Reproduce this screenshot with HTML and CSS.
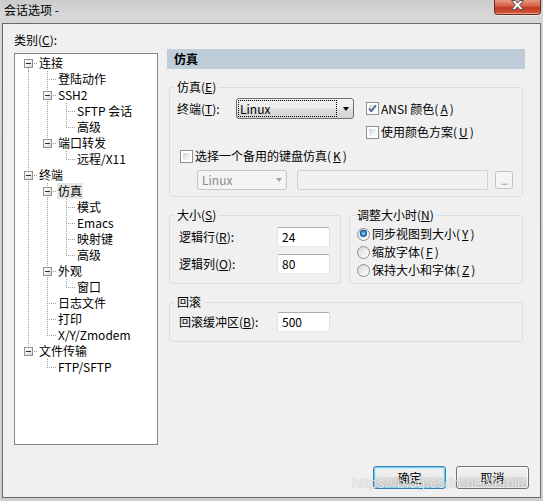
FILE: index.html
```html
<!DOCTYPE html>
<html lang="zh-CN">
<head>
  <meta charset="UTF-8">
  <title>会话选项</title>
  <link rel="stylesheet" href="styles.css">
</head>
<body>
<div class="window">
  <div class="titlebar">
    <span class="title">会话选项 -</span>
    <span class="close">
      <svg width="13" height="10" viewBox="0 0 13 10"><path d="M0.5 0.5h3.6L6.5 3.2 8.9 0.5h3.6L8.6 5l3.9 4.5H8.9L6.5 6.8 4.1 9.5H0.5L4.4 5z" fill="#fff" stroke="#555" stroke-width="1"/></svg>
    </span>
  </div>

  <div class="client">
    <div class="main">
      <!-- 左侧：类别树 -->
      <div class="category">
        <div class="cat-label">类别(<u>C</u>):</div>
        <div class="tree">
          <div class="node"><i class="g g-f"><b class="box"></b></i><span class="lbl">连接</span></div>
          <div class="node"><i class="g g-v"></i><i class="g g-t"></i><span class="lbl">登陆动作</span></div>
          <div class="node"><i class="g g-v"></i><i class="g g-t"><b class="box"></b></i><span class="lbl">SSH2</span></div>
          <div class="node"><i class="g g-v"></i><i class="g g-v"></i><i class="g g-t"></i><span class="lbl">SFTP 会话</span></div>
          <div class="node"><i class="g g-v"></i><i class="g g-v"></i><i class="g g-l"></i><span class="lbl">高级</span></div>
          <div class="node"><i class="g g-v"></i><i class="g g-l"><b class="box"></b></i><span class="lbl">端口转发</span></div>
          <div class="node"><i class="g g-v"></i><i class="g"></i><i class="g g-l"></i><span class="lbl">远程/X11</span></div>
          <div class="node"><i class="g g-t"><b class="box"></b></i><span class="lbl">终端</span></div>
          <div class="node"><i class="g g-v"></i><i class="g g-t"><b class="box"></b></i><span class="lbl current">仿真</span></div>
          <div class="node"><i class="g g-v"></i><i class="g g-v"></i><i class="g g-t"></i><span class="lbl">模式</span></div>
          <div class="node"><i class="g g-v"></i><i class="g g-v"></i><i class="g g-t"></i><span class="lbl">Emacs</span></div>
          <div class="node"><i class="g g-v"></i><i class="g g-v"></i><i class="g g-t"></i><span class="lbl">映射键</span></div>
          <div class="node"><i class="g g-v"></i><i class="g g-v"></i><i class="g g-l"></i><span class="lbl">高级</span></div>
          <div class="node"><i class="g g-v"></i><i class="g g-t"><b class="box"></b></i><span class="lbl">外观</span></div>
          <div class="node"><i class="g g-v"></i><i class="g g-v"></i><i class="g g-l"></i><span class="lbl">窗口</span></div>
          <div class="node"><i class="g g-v"></i><i class="g g-t"></i><span class="lbl">日志文件</span></div>
          <div class="node"><i class="g g-v"></i><i class="g g-t"></i><span class="lbl">打印</span></div>
          <div class="node"><i class="g g-v"></i><i class="g g-l"></i><span class="lbl">X/Y/Zmodem</span></div>
          <div class="node"><i class="g g-l"><b class="box"></b></i><span class="lbl">文件传输</span></div>
          <div class="node"><i class="g"></i><i class="g g-l"></i><span class="lbl">FTP/SFTP</span></div>
        </div>
      </div>

      <!-- 右侧：仿真页 -->
      <div class="page">
        <div class="page-title">仿真</div>

        <fieldset class="group g-emu">
          <legend>仿真(<u>E</u>)</legend>
          <div class="row row-term">
            <span class="lab-term">终端(<u>T</u>):</span>
            <span class="combo"><span class="combo-text">Linux</span><i class="arrow"></i></span>
            <span class="opt opt-ansi">
              <span class="check on"><svg width="9" height="9" viewBox="0 0 9 9"><path d="M1 4.5l2.3 2.6L8 1.2" fill="none" stroke="#4a6296" stroke-width="1.8"/></svg></span>ANSI 颜色(<u>A</u>)
            </span>
          </div>
          <div class="row row-scheme">
            <span class="opt"><span class="check"></span>使用颜色方案(<u>U</u>)</span>
          </div>
          <div class="row row-kbd">
            <span class="opt"><span class="check"></span>选择一个备用的键盘仿真(<u>K</u>)</span>
          </div>
          <div class="row row-alt">
            <span class="combo combo-off"><span class="combo-text">Linux</span><i class="arrow"></i></span>
            <span class="field-off"></span>
            <span class="dots">...</span>
          </div>
        </fieldset>

        <div class="pair">
          <fieldset class="group g-size">
            <legend>大小(<u>S</u>)</legend>
            <div class="line">
              <span class="lab">逻辑行(<u>R</u>):</span>
              <span class="field">24</span>
            </div>
            <div class="line line-2">
              <span class="lab">逻辑列(<u>O</u>):</span>
              <span class="field">80</span>
            </div>
          </fieldset>

          <fieldset class="group g-resize">
            <legend>调整大小时(<u>N</u>)</legend>
            <div class="radio-line"><span class="radio on"></span>同步视图到大小(<u>Y</u>)</div>
            <div class="radio-line"><span class="radio"></span>缩放字体(<u>F</u>)</div>
            <div class="radio-line"><span class="radio"></span>保持大小和字体(<u>Z</u>)</div>
          </fieldset>
        </div>

        <fieldset class="group g-scroll">
          <legend>回滚</legend>
          <div class="line">
            <span class="lab">回滚缓冲区(<u>B</u>):</span>
            <span class="field">500</span>
          </div>
        </fieldset>
      </div>
    </div>

    <div class="buttons">
      <span class="btn btn-default">确定</span>
      <span class="btn">取消</span>
    </div>
  </div>

  <div class="watermark">https://blog.csdn.net/leinili</div>
</div>
</body>
</html>
```

FILE: styles.css
```css
* {
  margin: 0;
  padding: 0;
  box-sizing: border-box;
}

body {
  width: 543px;
  height: 501px;
  overflow: hidden;
  font: 12px/16px "Noto Sans CJK SC", sans-serif;
  color: #000;
}

u {
  text-decoration: underline;
  text-underline-offset: 1px;
}

/* 窗口外框 */
.window {
  position: relative;
  height: 501px;
  padding: 0 2px 3px 2px;
  display: flex;
  flex-direction: column;
  background: linear-gradient(to bottom, #cbcbcb 0, #d6d6d6 12px, #d3d3d3 60%, #cfcfcf 100%);
}

.titlebar {
  height: 23px;
  flex: none;
  display: flex;
  justify-content: space-between;
  align-items: flex-start;
}

.title {
  padding: 2px 0 0 2px;
}

.close {
  width: 47px;
  height: 15px;
  display: flex;
  justify-content: center;
  align-items: flex-start;
  padding-top: 0;
  border: 1px solid #6a2a20;
  border-top: 0;
  border-radius: 0 0 4px 4px;
  background: linear-gradient(to bottom, #e79a86 0, #d45a43 45%, #c23a22 55%, #cf5a3e 100%);
  box-shadow: inset 0 -1px 0 rgba(255, 200, 180, .6), 0 1px 0 rgba(255, 255, 255, .5);
}

.client {
  flex: 1;
  display: flex;
  flex-direction: column;
  border: 1px solid #6a6a6a;
  background: #f0f0f0;
}

.main {
  display: flex;
  padding-left: 11px;
}

/* 类别树 */
.category {
  width: 144px;
  padding-top: 8px;
}

.cat-label {
  height: 16px;
  margin-bottom: 5px;
}

.tree {
  height: 392px;
  padding: 1px 0 0 4px;
  border: 1px solid #828790;
  background: #fff;
}

.node {
  display: flex;
  height: 16px;
}

.g {
  display: block;
  flex: none;
  width: 19px;
  height: 16px;
  --dv: repeating-linear-gradient(to bottom, #a0a0a0 0 1px, transparent 1px 2px);
  --dh: repeating-linear-gradient(to right, #a0a0a0 0 1px, transparent 1px 2px);
}

.g-v {
  background: var(--dv) 9px 0 / 1px 16px no-repeat;
}

.g-t {
  background: var(--dv) 9px 0 / 1px 16px no-repeat, var(--dh) 11px 8px / 8px 1px no-repeat;
}

.g-l {
  background: var(--dv) 9px 0 / 1px 9px no-repeat, var(--dh) 11px 8px / 8px 1px no-repeat;
}

.g-f {
  background: var(--dv) 9px 9px / 1px 7px no-repeat, var(--dh) 11px 8px / 8px 1px no-repeat;
}

.box {
  display: block;
  width: 9px;
  height: 9px;
  margin: 4px 0 0 5px;
  border: 1px solid #919191;
  background: linear-gradient(#2b2b2b, #2b2b2b) 1px 3px / 5px 1px no-repeat,
              linear-gradient(135deg, #fff 0, #f0f0f0 50%, #d6d6d6 100%);
}

.lbl {
  padding: 0 1px;
  white-space: nowrap;
}

.lbl.current {
  background: #e6e6e6;
}

/* 右侧页面 */
.page {
  width: 358px;
  margin-left: 9px;
  padding-top: 25px;
}

.page-title {
  height: 20px;
  padding-left: 7px;
  line-height: 20px;
  font-weight: bold;
  background: #bfcddb;
}

.group {
  min-width: 0;
  margin: 10px 2px 0;
  padding: 3px 8px 6px 7px;
  border: 1px solid #d5dfe5;
  border-radius: 3px;
}

.group legend {
  margin-left: -2px;
  padding: 0 2px;
  line-height: 16px;
}

.row {
  display: flex;
  align-items: center;
}

.row-term {
  height: 21px;
}

.lab-term {
  width: 59px;
}

.combo {
  display: flex;
  align-items: center;
  width: 118px;
  height: 21px;
  padding: 1px 0 1px 1px;
  border: 1px solid #707070;
  border-radius: 3px;
  background: linear-gradient(to bottom, #f3f3f3 0, #ececec 45%, #dedede 55%, #d4d4d4 100%);
}

.combo-text {
  flex: 1;
  height: 100%;
  padding-left: 1px;
  line-height: 15px;
  border: 1px dotted #000;
}

.arrow {
  display: block;
  width: 0;
  height: 0;
  margin: 0 4px 0 6px;
  border-top: 4px solid #000;
  border-left: 3.5px solid transparent;
  border-right: 3.5px solid transparent;
}

.opt {
  display: flex;
  align-items: center;
  gap: 2px;
  height: 16px;
  white-space: nowrap;
}

.opt-ansi {
  margin-left: 12px;
}

.check {
  display: flex;
  align-items: center;
  justify-content: center;
  width: 13px;
  height: 13px;
  padding: 2px;
  border: 1px solid #8e8f8f;
  background: linear-gradient(135deg, #cdd1d6 0, #eef0f2 60%, #f8f8f8 100%) content-box,
              linear-gradient(#fff, #fff) padding-box;
}

.check svg {
  flex: none;
}

.row-scheme {
  margin-top: 5px;
  padding-left: 189px;
}

.row-kbd {
  margin-top: 8px;
  padding-left: 3px;
}

.row-alt {
  margin-top: 6px;
  padding-left: 20px;
  height: 20px;
}

.combo-off {
  width: 90px;
  height: 20px;
  padding-left: 3px;
  color: #8a8a8a;
  border-color: #c2c4c6;
  background: #f4f4f4;
}

.combo-off .combo-text {
  border: 0;
  line-height: 16px;
}

.combo-off .arrow {
  border-top-color: #a3a3a3;
}

.field-off {
  width: 191px;
  height: 20px;
  margin-left: 10px;
  border: 1px solid #cfd1d3;
  border-radius: 2px;
  background: #f0f0f0;
}

.dots {
  width: 18px;
  height: 18px;
  margin-left: 7px;
  border: 1px solid #c4c4c4;
  border-radius: 3px;
  background: #f4f4f4;
  color: #9a9a9a;
  font-size: 11px;
  line-height: 16px;
  text-align: center;
  letter-spacing: -1px;
}

.pair {
  display: flex;
  gap: 8px;
  margin: 10px 2px 0;
}

.pair .group {
  margin: 0;
}

.g-size {
  width: 172px;
  padding: 4px 6px 9px 7px;
}

.g-resize {
  flex: 1;
  padding: 2px 6px 4px 7px;
}

.line {
  display: flex;
  align-items: center;
  padding-left: 2px;
}

.line-2 {
  margin-top: 7px;
}

.lab {
  width: 98px;
}

.field {
  width: 53px;
  height: 20px;
  padding-left: 4px;
  line-height: 18px;
  border: 1px solid;
  border-color: #abadb3 #dbdfe6 #e3e9ef #e2e3ea;
  border-radius: 2px;
  background: #fff;
}

.radio-line {
  display: flex;
  align-items: center;
  gap: 2px;
  height: 18px;
  white-space: nowrap;
}

.radio {
  width: 13px;
  height: 13px;
  border: 1px solid #8e8f8f;
  border-radius: 50%;
  background: linear-gradient(135deg, #d2d4d7 0, #f2f2f2 60%, #fff 100%);
}

.radio.on {
  background: radial-gradient(circle at 50% 40%, #a9dcf7 0, #3a86c4 2px, #1c5c98 3.5px, transparent 4px),
              linear-gradient(135deg, #d2d4d7 0, #f2f2f2 60%, #fff 100%);
}

.g-scroll {
  padding: 2px 8px 9px 7px;
}

/* 底部按钮 */
.buttons {
  display: flex;
  justify-content: flex-end;
  gap: 10px;
  margin-top: auto;
  padding: 0 11px 8px 0;
}

.btn {
  display: flex;
  align-items: center;
  justify-content: center;
  width: 73px;
  height: 23px;
  border: 1px solid #707070;
  border-radius: 3px;
  background: linear-gradient(to bottom, #f2f2f2 0, #ebebeb 45%, #dddddd 50%, #cfcfcf 100%);
  box-shadow: inset 0 0 0 1px rgba(255, 255, 255, .75);
}

.btn-default {
  border-color: #3c7fb1;
  box-shadow: inset 0 0 0 1px #6fd0f6, inset 0 0 0 2px rgba(180, 230, 250, .6);
}

.watermark {
  position: absolute;
  left: 352px;
  top: 474px;
  font: 15px/18px "Liberation Sans", Arial, sans-serif;
  color: rgba(255, 255, 255, .8);
  text-shadow: 0 0 1px rgba(0, 0, 0, .35);
  white-space: nowrap;
}
```
